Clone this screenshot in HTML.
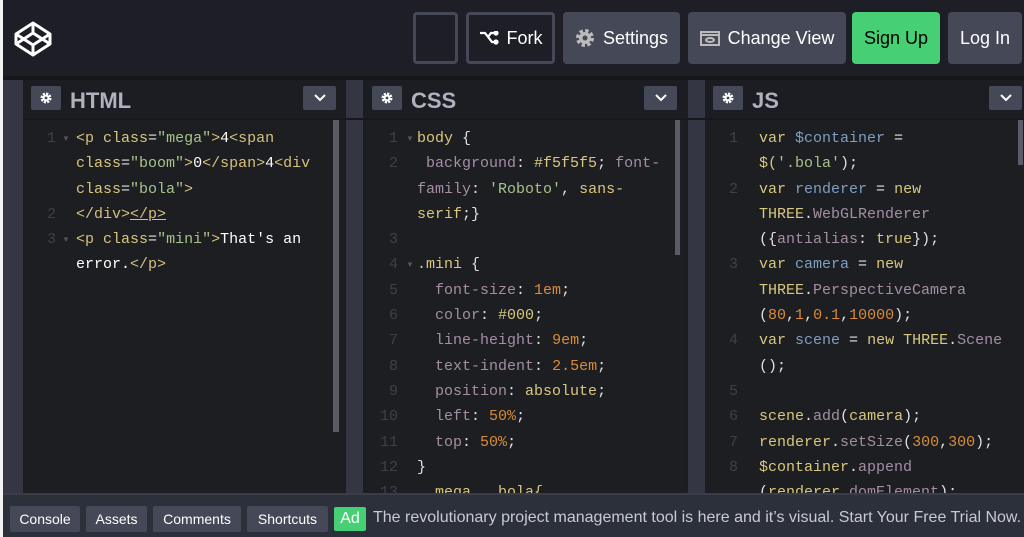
<!DOCTYPE html>
<html><head><meta charset="utf-8">
<style>
*{margin:0;padding:0;box-sizing:border-box}
body{width:1024px;height:537px;overflow:hidden;background:#1d1e22;position:relative;font-family:"Liberation Sans",sans-serif}
.a{position:absolute}
.hdr{left:0;top:0;width:1024px;height:76px;background:#1e1f26}
.btn{position:absolute;top:12px;height:52px;border-radius:4px;background:#444857;color:#fff;font-size:18px;display:flex;align-items:center;justify-content:center;gap:8px}
.gut{background:#343743}
.ph{position:absolute;top:80px;height:38px;background:#1c1d22}
.gear{position:absolute;top:86px;width:30px;height:24px;background:#444857;border-radius:2px;display:flex;align-items:center;justify-content:center}
.chev{position:absolute;top:86px;width:33px;height:24px;background:#444857;border-radius:2px;display:flex;align-items:center;justify-content:center}
.title{position:absolute;top:86px;font-size:22px;font-weight:bold;color:#aeb2bf;line-height:29px}
.code{position:absolute;top:126px;font-family:"Liberation Mono",monospace;font-size:15px;line-height:25.3px;color:#e0e0e0;white-space:pre}
.ln{position:absolute;top:126px;font-family:"Liberation Mono",monospace;font-size:15px;line-height:25.3px;color:#3e4049;white-space:pre;text-align:right}
.t{color:#d5c07d}.s{color:#a8c28a}.w{color:#fff}.p{color:#a48ea3}.n{color:#d98b3a}.v{color:#7e9ec2}.k{color:#d8c77e}
.bb{position:absolute;top:506px;height:26px;background:#444857;color:#fff;font-size:14px;display:flex;align-items:center;justify-content:center;border-radius:2px}
</style></head><body>
<div class="a" style="left:0;top:0;width:3px;height:537px;background:#f2f2f2;z-index:5"></div>
<div class="a hdr"></div>
<svg class="a" style="left:14px;top:21px" width="38" height="36" viewBox="0 0 38 36" fill="none" stroke="#fff" stroke-width="3" stroke-linejoin="round"><path d="M19 2L36 13V23L19 34L2 23V13Z"/><path d="M19 2V12M19 24V34M2 13L19 24L36 13M2 23L19 12L36 23"/></svg>
<div class="a" style="left:413px;top:12px;width:45px;height:52px;border:3px solid #444857;border-radius:4px"></div>
<div class="btn" style="left:466px;width:89px;background:#1e1f26;border:3px solid #444857"><svg width="20" height="14" viewBox="0 0 20 14" fill="none" stroke="#fff" stroke-width="2.2"><path d="M1 2H6L13 11H17M9 6L12 2H17"/><circle cx="17" cy="11" r="1.5" fill="#fff"/><circle cx="17" cy="2" r="1.5" fill="#fff"/></svg>Fork</div>
<div class="btn" style="left:563px;width:117px"><svg width="20" height="20" viewBox="0 0 20 20"><circle cx="10" cy="10" r="6.5" fill="none" stroke="#bbb" stroke-width="5" stroke-dasharray="3 2.1"/><circle cx="10" cy="10" r="6" fill="#bbb"/><circle cx="10" cy="10" r="2.5" fill="#444857"/></svg>Settings</div>
<div class="btn" style="left:688px;width:158px"><svg width="20" height="15" viewBox="0 0 20 15" fill="none" stroke="#bbb" stroke-width="2"><rect x="1" y="1" width="18" height="13"/><line x1="1" y1="4" x2="19" y2="4"/><ellipse cx="10" cy="9" rx="4" ry="2"/></svg>Change View</div>
<div class="btn" style="left:852px;width:88px;background:#47cf73;color:#000">Sign Up</div>
<div class="btn" style="left:948px;width:74px">Log In</div>

<div class="a" style="left:0;top:76px;width:1024px;height:4px;background:#16171b"></div>
<div class="a gut" style="left:3px;top:80px;width:20px;height:413px"></div>
<div class="a" style="left:343px;top:80px;width:3px;height:413px;background:#1c1d22"></div>
<div class="a gut" style="left:346px;top:80px;width:17px;height:413px"></div>
<div class="a" style="left:685px;top:80px;width:3px;height:413px;background:#1c1d22"></div>
<div class="a gut" style="left:688px;top:80px;width:17px;height:413px"></div>

<div class="ph" style="left:23px;width:320px"></div>
<div class="ph" style="left:363px;width:322px"></div>
<div class="ph" style="left:705px;width:319px"></div>
<div class="a" style="left:23px;top:118px;width:1001px;height:2px;background:#17181c"></div>

<div class="gear" style="left:31px"><svg width="12" height="12" viewBox="0 0 12 12"><circle cx="6" cy="6" r="4" fill="none" stroke="#fff" stroke-width="3" stroke-dasharray="2 1.14"/><circle cx="6" cy="6" r="3.5" fill="#fff"/><circle cx="6" cy="6" r="1.4" fill="#444857"/></svg></div>
<div class="title" style="left:70px">HTML</div>
<div class="chev" style="left:303px"><svg width="12" height="8" viewBox="0 0 12 8" fill="none" stroke="#fff" stroke-width="2"><path d="M1 1L6 6L11 1"/></svg></div>
<div class="gear" style="left:372px"><svg width="12" height="12" viewBox="0 0 12 12"><circle cx="6" cy="6" r="4" fill="none" stroke="#fff" stroke-width="3" stroke-dasharray="2 1.14"/><circle cx="6" cy="6" r="3.5" fill="#fff"/><circle cx="6" cy="6" r="1.4" fill="#444857"/></svg></div>
<div class="title" style="left:411px">CSS</div>
<div class="chev" style="left:644px"><svg width="12" height="8" viewBox="0 0 12 8" fill="none" stroke="#fff" stroke-width="2"><path d="M1 1L6 6L11 1"/></svg></div>
<div class="gear" style="left:713px"><svg width="12" height="12" viewBox="0 0 12 12"><circle cx="6" cy="6" r="4" fill="none" stroke="#fff" stroke-width="3" stroke-dasharray="2 1.14"/><circle cx="6" cy="6" r="3.5" fill="#fff"/><circle cx="6" cy="6" r="1.4" fill="#444857"/></svg></div>
<div class="title" style="left:752px">JS</div>
<div class="chev" style="left:989px"><svg width="12" height="8" viewBox="0 0 12 8" fill="none" stroke="#fff" stroke-width="2"><path d="M1 1L6 6L11 1"/></svg></div>

<div class="a" style="left:333px;top:120px;width:6px;height:312px;background:#5a5d68"></div>
<div class="a" style="left:675px;top:120px;width:5px;height:135px;background:#5a5d68"></div>
<div class="a" style="left:1018px;top:120px;width:5px;height:45px;background:#5a5d68"></div>

<div class="ln" style="left:40px;width:16px">1
 
 
2
3
 </div>
<div class="a" style="left:62px;top:134px;color:#555;font-size:8px">▼</div>
<div class="a" style="left:62px;top:235px;color:#555;font-size:8px">▼</div>
<div class="code" style="left:76px"><span class="t">&lt;p</span> <span class="k">class</span>=<span class="s">"mega"</span><span class="t">&gt;</span><span class="w">4</span><span class="t">&lt;span</span>
<span class="k">class</span>=<span class="s">"boom"</span><span class="t">&gt;</span><span class="w">0</span><span class="t">&lt;/span&gt;</span><span class="w">4</span><span class="t">&lt;div</span>
<span class="k">class</span>=<span class="s">"bola"</span><span class="t">&gt;</span>
<span class="t">&lt;/div&gt;<u>&lt;/p&gt;</u></span>
<span class="t">&lt;p</span> <span class="k">class</span>=<span class="s">"mini"</span><span class="t">&gt;</span><span class="w">That's an</span>
<span class="w">error.</span><span class="t">&lt;/p&gt;</span></div>

<div class="ln" style="left:378px;width:20px">1
2
 
 
3
4
5
6
7
8
9
10
11
12
13</div>
<div class="a" style="left:406px;top:134px;color:#555;font-size:8px">▼</div>
<div class="a" style="left:406px;top:260px;color:#555;font-size:8px">▼</div>
<div class="code" style="left:417px;height:367px;overflow:hidden"><span class="k">body</span> {
 <span class="p">background</span>: <span class="k">#f5f5f5</span>; <span class="p">font-</span>
<span class="p">family</span>: <span class="s">'Roboto'</span>, <span class="k">sans-</span>
<span class="k">serif</span>;}

<span class="k">.mini</span> {
  <span class="p">font-size</span>: <span class="n">1em</span>;
  <span class="p">color</span>: <span class="k">#000</span>;
  <span class="p">line-height</span>: <span class="n">9em</span>;
  <span class="p">text-indent</span>: <span class="n">2.5em</span>;
  <span class="p">position</span>: <span class="k">absolute</span>;
  <span class="p">left</span>: <span class="n">50%</span>;
  <span class="p">top</span>: <span class="n">50%</span>;
}
 <span class="k">.mega, .bola{</span></div>

<div class="ln" style="left:722px;width:16px">1
 
2
 
 
3
 
 
4
 
5
6
7
8</div>
<div class="code" style="left:759px;height:367px;overflow:hidden"><span class="k">var</span> <span class="v">$container</span> =
<span class="k">$(</span><span class="s">'.bola'</span>);
<span class="k">var</span> <span class="v">renderer</span> = <span class="k">new</span>
<span class="k">THREE</span>.<span class="p">WebGLRenderer</span>
({<span class="p">antialias</span>: <span class="k">true</span>});
<span class="k">var</span> <span class="v">camera</span> = <span class="k">new</span>
<span class="k">THREE</span>.<span class="p">PerspectiveCamera</span>
(<span class="n">80</span>,<span class="n">1</span>,<span class="n">0.1</span>,<span class="n">10000</span>);
<span class="k">var</span> <span class="v">scene</span> = <span class="k">new</span> <span class="k">THREE</span>.<span class="p">Scene</span>
();

<span class="k">scene</span>.<span class="p">add</span>(<span class="k">camera</span>);
<span class="k">renderer</span>.<span class="p">setSize</span>(<span class="n">300</span>,<span class="n">300</span>);
<span class="k">$container</span>.<span class="p">append</span>
(<span class="k">renderer</span>.<span class="p">domElement</span>);</div>

<div class="a" style="left:0;top:493px;width:1024px;height:44px;background:#2c303a"></div>
<div class="a" style="left:0;top:493px;width:1024px;height:2px;background:#3a3d48"></div>
<div class="bb" style="left:10px;width:70px">Console</div>
<div class="bb" style="left:86px;width:61px">Assets</div>
<div class="bb" style="left:153px;width:88px">Comments</div>
<div class="bb" style="left:247px;width:81px">Shortcuts</div>
<div class="bb" style="left:334px;width:32px;background:#47cf73;font-size:16px;top:507px;height:24px">Ad</div>
<div class="a" style="left:373px;top:509px;font-size:16px;color:#c8cad2;white-space:nowrap;letter-spacing:0">The revolutionary project management tool is here and it’s visual. Start Your Free Trial Now.</div>
</body></html>
